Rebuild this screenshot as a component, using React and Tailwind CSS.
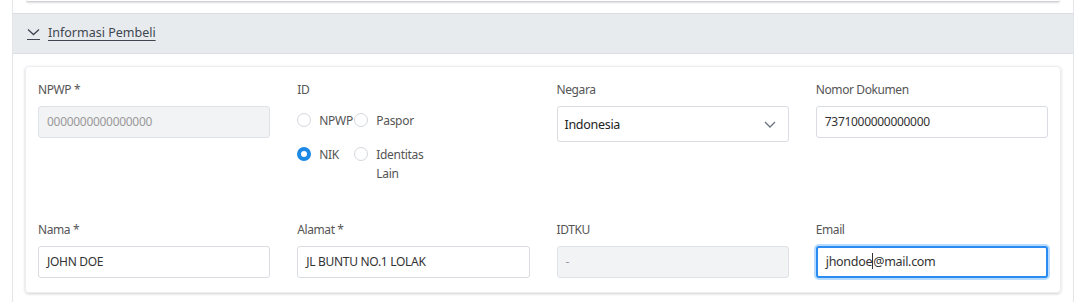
import React from 'react'

const font = { fontFamily: '"Noto Sans", "Open Sans", sans-serif' }

const Label = ({ children }) => (
  <div className="text-[12px] leading-[18px] tracking-[-0.4px] text-[#555] mb-[7px]">{children}</div>
)

const TextInput = ({ value, disabled, focused }) => {
  let cls = 'h-[32px] rounded-[3px] px-[8px] flex items-center text-[12px] tracking-[-0.3px] '
  if (disabled) cls += 'bg-[#f2f3f5] border border-[#dfe2e6] text-[#9a9a9a]'
  else if (focused) cls += 'bg-white border-2 border-[#2a8cf0] ring-2 ring-[#b7dcff] text-[#333] px-[7px]'
  else cls += 'bg-white border border-[#d9dce1] text-[#333]'
  return (
    <div className={cls}>
      {focused ? (
        <span className="text-[12.5px]">
          jhondoe<span className="inline-block w-px h-[16px] bg-[#333] align-middle -mt-[2px]" />@mail.com
        </span>
      ) : (
        value
      )}
    </div>
  )
}

const Radio = ({ label, checked }) => (
  <div className="flex items-start gap-[8px]">
    <span
      className={
        checked
          ? 'mt-[2px] w-[14px] h-[14px] rounded-full border-[4px] border-[#1e88e5] bg-white shrink-0'
          : 'mt-[2px] w-[14px] h-[14px] rounded-full border border-[#d4d7dc] bg-white shrink-0'
      }
    />
    <span className="text-[12px] leading-[19px] tracking-[-0.3px] text-[#555]">{label}</span>
  </div>
)

export default function App() {
  return (
    <div className="w-[1077px] h-[302px] bg-white overflow-hidden" style={font}>
      <div className="ml-[12px] w-[1062px] h-[302px] border-x border-[#e3e5e8]">
        <div className="mx-[13px] h-[2px] border-b border-[#cfd2d6] shadow-[0_1px_2px_rgba(0,0,0,0.15)] rounded-b-[3px]" />
        <div className="mt-[11px] h-[41px] bg-[#e8ebee] border-y border-[#dadde1] flex items-center pl-[14px]">
          <div className="flex items-center text-[12.5px] text-[#3f4650] underline underline-offset-[3px]">
            <span className="relative w-[13px] h-[14px] mr-[8px]">
              <svg width="13" height="8" viewBox="0 0 13 8" className="absolute top-[1px] left-0">
                <path d="M1 1.5 L6.5 6.5 L12 1.5" fill="none" stroke="#3f4650" strokeWidth="1.3" />
              </svg>
              <span className="absolute left-0 right-0 top-[12px] h-px bg-[#3f4650]" />
            </span>
            Informasi Pembeli
          </div>
        </div>
        <div className="mt-[12px] mx-[12px] h-[227px] rounded-[4px] border border-[#ebedf0] shadow-[0_1px_3px_rgba(0,0,0,0.18)] px-[12px] pt-[14px]">
          <div className="grid grid-cols-4 gap-x-[27px]">
            <div className="h-[140px]">
              <Label>NPWP *</Label>
              <TextInput value="0000000000000000" disabled />
            </div>
            <div>
              <Label>ID</Label>
              <div className="grid grid-cols-[57px_76px] gap-y-[15px] mt-[12px]">
                <Radio label="NPWP" />
                <Radio label="Paspor" />
                <Radio label="NIK" checked />
                <Radio label={<>Identitas<br />Lain</>} />
              </div>
            </div>
            <div>
              <Label>Negara</Label>
              <div className="h-[36px] rounded-[3px] border border-[#d9dce1] bg-white flex items-center justify-between pl-[7px] pr-[12px] text-[12.5px] tracking-[-0.3px] text-[#222]">
                <span className="mt-[2px]">Indonesia</span>
                <svg width="12" height="7" viewBox="0 0 12 7">
                  <path d="M1 1 L6 6 L11 1" fill="none" stroke="#6b7280" strokeWidth="1.3" />
                </svg>
              </div>
            </div>
            <div>
              <Label>Nomor Dokumen</Label>
              <TextInput value="7371000000000000" />
            </div>
            <div>
              <Label>Nama *</Label>
              <TextInput value="JOHN DOE" />
            </div>
            <div>
              <Label>Alamat *</Label>
              <TextInput value="JL BUNTU NO.1 LOLAK" />
            </div>
            <div>
              <Label>IDTKU</Label>
              <TextInput value="-" disabled />
            </div>
            <div>
              <Label>Email</Label>
              <TextInput focused />
            </div>
          </div>
        </div>
      </div>
    </div>
  )
}
